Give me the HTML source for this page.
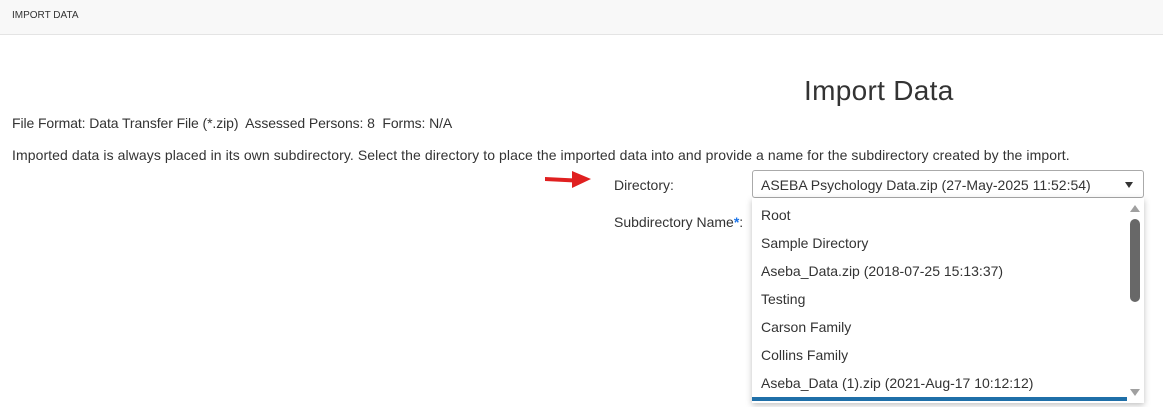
<!DOCTYPE html>
<html><head><style>
body{margin:0;width:1163px;height:407px;overflow:hidden;background:#fff;font-family:"Liberation Sans",sans-serif;color:#333;position:relative}
.hdr{position:absolute;left:0;top:0;width:1163px;height:34px;background:#f8f8f8;border-bottom:1px solid #e4e4e4}
.hdr span{position:absolute;left:12px;top:10px;font-size:10px;color:#333}
.t{position:absolute;white-space:nowrap;font-size:14px}
.sel{position:absolute;left:752px;top:170px;width:392px;height:28px;border:1px solid #aaa;border-radius:3px;box-sizing:border-box;background:#fff}
.sel span{position:absolute;left:8px;top:6px;font-size:14px}
.sel i{position:absolute;right:10px;top:11px;width:0;height:0;border-left:4px solid transparent;border-right:4px solid transparent;border-top:6px solid #333}
.lst{position:absolute;left:752px;top:198px;width:392px;height:205px;background:#fff;box-shadow:0 2px 6px rgba(0,0,0,.25);overflow:hidden}
.it{position:absolute;left:9px;font-size:14px;white-space:nowrap}
</style></head><body>
<div class="hdr"><span>IMPORT DATA</span></div>
<div class="t" style="left:804px;top:75px;font-size:28px;color:#333;letter-spacing:0.3px">Import Data</div>
<div class="t" style="left:12px;top:115px;letter-spacing:-0.1px">File Format: Data Transfer File (*.zip)&nbsp; Assessed Persons: 8&nbsp; Forms: N/A</div>
<div class="t" style="left:12px;top:147px;letter-spacing:0.08px">Imported data is always placed in its own subdirectory. Select the directory to place the imported data into and provide a name for the subdirectory created by the import.</div>
<svg style="position:absolute;left:545px;top:169px" width="46" height="20"><path d="M0 8 L30 9.5 L30 13.5 L0 12Z" fill="#e02020"/><path d="M27 2 L46 10 L27 19Z" fill="#e02020"/></svg>
<div class="t" style="left:614px;top:177px">Directory:</div>
<div class="t" style="left:614px;top:214px">Subdirectory Name<span style="color:#1a73e8;font-weight:bold">*</span>:</div>
<div class="sel"><span>ASEBA Psychology Data.zip (27-May-2025 11:52:54)</span><i></i></div>
<div class="lst">
<div class="it" style="top:9px">Root</div>
<div class="it" style="top:37px">Sample Directory</div>
<div class="it" style="top:65px">Aseba_Data.zip (2018-07-25 15:13:37)</div>
<div class="it" style="top:93px">Testing</div>
<div class="it" style="top:121px">Carson Family</div>
<div class="it" style="top:149px">Collins Family</div>
<div class="it" style="top:177px">Aseba_Data (1).zip (2021-Aug-17 10:12:12)</div>
<div style="position:absolute;left:0;top:199px;width:375px;height:4px;background:#1f6fa8"></div>
<div style="position:absolute;left:378px;top:7px;width:0;height:0;border-left:5px solid transparent;border-right:5px solid transparent;border-bottom:7px solid #a0a0a0"></div>
<div style="position:absolute;left:378px;top:21px;width:10px;height:83px;border-radius:5px;background:#686868"></div>
<div style="position:absolute;left:378px;top:191px;width:0;height:0;border-left:5px solid transparent;border-right:5px solid transparent;border-top:7px solid #a0a0a0"></div>
</div>
</body></html>
